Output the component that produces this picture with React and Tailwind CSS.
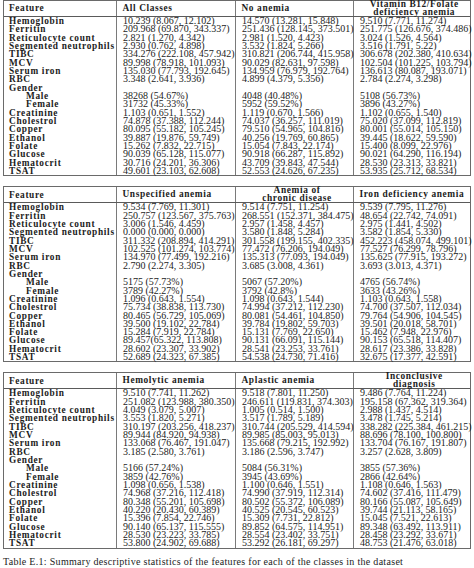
import React from "react";

const FEATURES = [
  "Hemoglobin",
  "Ferritin",
  "Reticulocyte count",
  "Segmented neutrophils",
  "TIBC",
  "MCV",
  "Serum iron",
  "RBC",
  "Gender",
  "Male",
  "Female",
  "Creatinine",
  "Cholestrol",
  "Copper",
  "Ethanol",
  "Folate",
  "Glucose",
  "Hematocrit",
  "TSAT",
];

const TABLES = [
  {
    headers: [
      { lines: ["All Classes"] },
      { lines: ["No anemia"] },
      { lines: ["Vitamin B12/Folate", "deficiency anemia"], center: true },
    ],
    cols: [
      [
        "10.239 (8.067, 12.102)",
        "209.968 (69.870, 343.337)",
        "2.821 (1.270, 4.342)",
        "2.930 (0.762, 4.898)",
        "334.276 (222.108, 457.942)",
        "89.998 (78.918, 101.093)",
        "135.030 (77.793, 192.645)",
        "3.348 (2.641, 3.936)",
        "",
        "38268 (54.67%)",
        "31732 (45.33%)",
        "1.103 (0.651, 1.552)",
        "74.878 (37.388, 112.244)",
        "80.095 (55.182, 105.245)",
        "39.887 (19.876, 59.749)",
        "15.262 (7.832, 22.715)",
        "90.039 (65.128, 115.077)",
        "30.716 (24.201, 36.306)",
        "49.601 (23.103, 62.608)",
      ],
      [
        "14.570 (13.281, 15.848)",
        "251.436 (128.145, 373.501)",
        "2.981 (1.520, 4.423)",
        "3.532 (1.824, 5.266)",
        "310.821 (206.744, 415.958)",
        "90.029 (82.631, 97.598)",
        "134.959 (76.979, 192.764)",
        "4.899 (4.379, 5.356)",
        "",
        "4048 (40.48%)",
        "5952 (59.52%)",
        "1.119 (0.670, 1.566)",
        "74.037 (36.257, 111.019)",
        "79.510 (54.965, 104.816)",
        "40.256 (19.769, 60.865)",
        "15.054 (7.843, 22.174)",
        "90.918 (66.287, 115.892)",
        "43.709 (39.843, 47.544)",
        "52.553 (24.626, 67.235)",
      ],
      [
        "9.510 (7.771, 11.274)",
        "251.775 (126.676, 374.486)",
        "3.024 (1.526, 4.564)",
        "3.516 (1.791, 5.22)",
        "306.678 (202.380, 410.634)",
        "102.504 (101.225, 103.794)",
        "136.613 (80.087, 193.071)",
        "2.784 (2.274, 3.298)",
        "",
        "5108 (56.73%)",
        "3896 (43.27%)",
        "1.102 (0.655, 1.540)",
        "75.020 (37.099, 112.819)",
        "80.001 (55.014, 105.150)",
        "39.445 (18.622, 59.590)",
        "15.400 (8.099, 22.976)",
        "90.021 (64.290, 116.194)",
        "28.530 (23.313, 33.821)",
        "53.935 (25.712, 68.534)",
      ],
    ],
  },
  {
    headers: [
      { lines: ["Unspecified anemia"] },
      { lines: ["Anemia of", "chronic disease"], center: true },
      { lines: ["Iron deficiency anemia"] },
    ],
    cols: [
      [
        "9.534 (7.769, 11.301)",
        "250.757 (123.567, 375.763)",
        "3.006 (1.546, 4.459)",
        "0.000 (0.000, 0.000)",
        "311.332 (208.894, 414.291)",
        "102.525 (101.274, 103.774)",
        "134.970 (77.499, 192.216)",
        "2.790 (2.274, 3.305)",
        "",
        "5175 (57.73%)",
        "3789 (42.27%)",
        "1.096 (0.643, 1.554)",
        "75.734 (38.838, 113.730)",
        "80.465 (56.729, 105.069)",
        "39.500 (19.102, 22.784)",
        "15.284 (7.919, 22.784)",
        "89.457(65.322, 113.808)",
        "28.602 (23.307, 33.902)",
        "52.689 (24.323, 67.385)",
      ],
      [
        "9.514 (7.751, 11.254)",
        "268.551 (152.371, 384.475)",
        "2.957 (1.458, 4.457)",
        "3.580 (1.848, 5.284)",
        "301.558 (199.155, 402.335)",
        "77.472 (76.206, 194.049)",
        "135.313 (77.093, 194.049)",
        "3.685 (3.008, 4.361)",
        "",
        "5067 (57.20%)",
        "3792 (42.8%)",
        "1.098 (0.643, 1.544)",
        "74.994 (37.212, 112.230)",
        "80.081 (54.461, 104.850)",
        "39.784 (19.802, 59.703)",
        "15.131 (7.769, 22.650)",
        "90.131 (66.091, 115.144)",
        "28.541 (23.253, 33.761)",
        "54.538 (24.730, 71.416)",
      ],
      [
        "9.539 (7.795, 11.276)",
        "48.654 (22.742, 74.091)",
        "2.975 (1.441, 4.502)",
        "3.582 (1.854, 5.330)",
        "452.223 (458.074, 499.101)",
        "77.527 (76.299, 78.796)",
        "135.625 (77.915, 193.272)",
        "3.693 (3.013, 4.371)",
        "",
        "4765 (56.74%)",
        "3633 (43.26%)",
        "1.103 (0.643, 1.558)",
        "74.700 (37.507, 112.034)",
        "79.764 (54.906, 104.545)",
        "39.501 (20.018, 58.701)",
        "15.462 (7.948, 22.976)",
        "90.153 (65.518, 114.407)",
        "28.617 (23.386, 33.828)",
        "32.675 (17.377, 42.591)",
      ],
    ],
  },
  {
    headers: [
      { lines: ["Hemolytic anemia"] },
      { lines: ["Aplastic anemia"] },
      { lines: ["Inconclusive", "diagnosis"], center: true },
    ],
    cols: [
      [
        "9.510 (7.741, 11.262)",
        "251.082 (123.988, 380.350)",
        "4.049 (3.079, 5.007)",
        "3.553 (1.820, 5.271)",
        "310.197 (203.256, 418.237)",
        "89.944 (84.920, 94.938)",
        "133.068 (76.467, 191.047)",
        "3.185 (2.580, 3.761)",
        "",
        "5166 (57.24%)",
        "3859 (42.76%)",
        "1.098 (0.656, 1.538)",
        "74.968 (37.216, 112.418)",
        "80.348 (55.201, 105.698)",
        "40.220 (20.430, 60.389)",
        "15.396 (7.854, 22.746)",
        "90.140 (65.137, 115.555)",
        "28.530 (23.223, 33.785)",
        "53.800 (24.902, 69.688)",
      ],
      [
        "9.518 (7.801, 11.250)",
        "246.611 (119.831, 374.303)",
        "1.005 (0.514, 1.500)",
        "3.517 (1.789, 5.189)",
        "310.744 (205.529, 414.594)",
        "89.985 (85.003, 95.013)",
        "135.668 (79.215, 192.992)",
        "3.186 (2.596, 3.747)",
        "",
        "5084 (56.31%)",
        "3945 (43.69%)",
        "1.100 (0.646, 1.551)",
        "74.990 (37.919, 112.314)",
        "80.502 (55.372, 106.089)",
        "40.525 (20.545, 60.523)",
        "15.309 (7.731, 22.812)",
        "89.852 (64.575, 114.951)",
        "28.554 (23.402, 33.751)",
        "53.292 (26.181, 69.297)",
      ],
      [
        "9.486 (7.764, 11.224)",
        "195.158 (67.362, 319.364)",
        "2.988 (1.437, 4.514)",
        "3.478 (1.745, 5.214)",
        "338.282 (225.384, 461.215)",
        "88.696 (78.100, 100.800)",
        "133.704 (76.167, 191.807)",
        "3.257 (2.628, 3.809)",
        "",
        "3855 (57.36%)",
        "2866 (42.64%)",
        "1.108 (0.646, 1.563)",
        "74.602 (37.416, 111.479)",
        "80.166 (55.087, 105.649)",
        "39.744 (21.113, 58.165)",
        "15.045 (7.521, 22.613)",
        "89.348 (63.492, 113.911)",
        "28.458 (23.292, 33.671)",
        "48.753 (21.476, 63.018)",
      ],
    ],
  },
];

function HeaderCell({ h, last }) {
  return (
    <div
      className={
        "flex h-[15px] flex-col justify-center pl-[6px] text-[9.4px] font-bold leading-[7.8px] tracking-[0.6px] " +
        (h.center ? "items-center pl-0 text-center " : "items-start ") +
        (last ? "" : "border-r border-[#7a7a7a]")
      }
    >
      {h.lines.map((l) => (
        <span key={l} className="whitespace-nowrap">
          {l}
        </span>
      ))}
    </div>
  );
}

function Table({ t }) {
  return (
    <div className="ml-[3px] w-[468px] border-[1.5px] border-[#6a6a6a] text-[#1c1c1c]">
      <div className="grid grid-cols-[112.5px_119px_118px_115.5px] border-b-[1.5px] border-[#5a5a5a]">
        <div className="flex h-[15px] items-center border-r border-[#7a7a7a] pl-[5px] text-[9.4px] font-bold tracking-[0.6px]">
          Feature
        </div>
        {t.headers.map((h, i) => (
          <HeaderCell key={i} h={h} last={i === 2} />
        ))}
      </div>
      <div className="grid grid-cols-[112.5px_119px_118px_115.5px]">
        <div className="border-r border-[#7a7a7a]">
          {FEATURES.map((f) => (
            <div
              key={f}
              className={
                "h-[8.33px] whitespace-nowrap text-[9.3px] font-bold leading-[8.33px] tracking-[0.7px] " +
                (f === "Male" || f === "Female" ? "pl-[22px]" : "pl-[5px]")
              }
            >
              {f}
            </div>
          ))}
        </div>
        {t.cols.map((col, ci) => (
          <div
            key={ci}
            className={ci === 2 ? "" : "border-r border-[#7a7a7a]"}
          >
            {col.map((v, ri) => (
              <div
                key={ri}
                className="h-[8.33px] whitespace-nowrap pl-[6.5px] text-[10px] leading-[8.33px]"
              >
                {v}
              </div>
            ))}
          </div>
        ))}
      </div>
    </div>
  );
}

export default function App() {
  return (
    <div
      className="h-[568px] w-[474px] overflow-hidden bg-white"
      style={{ fontFamily: '"Liberation Serif", "Times New Roman", serif' }}
    >
      <div className="flex flex-col gap-[10px]">
        {TABLES.map((t, i) => (
          <Table key={i} t={t} />
        ))}
      </div>
      <div className="mt-[8px] whitespace-nowrap pl-[3px] text-[10px] leading-[10px] tracking-[0.3px] text-[#1c1c1c]">
        Table E.1: Summary descriptive statistics of the features for each of the classes in the dataset
      </div>
    </div>
  );
}
